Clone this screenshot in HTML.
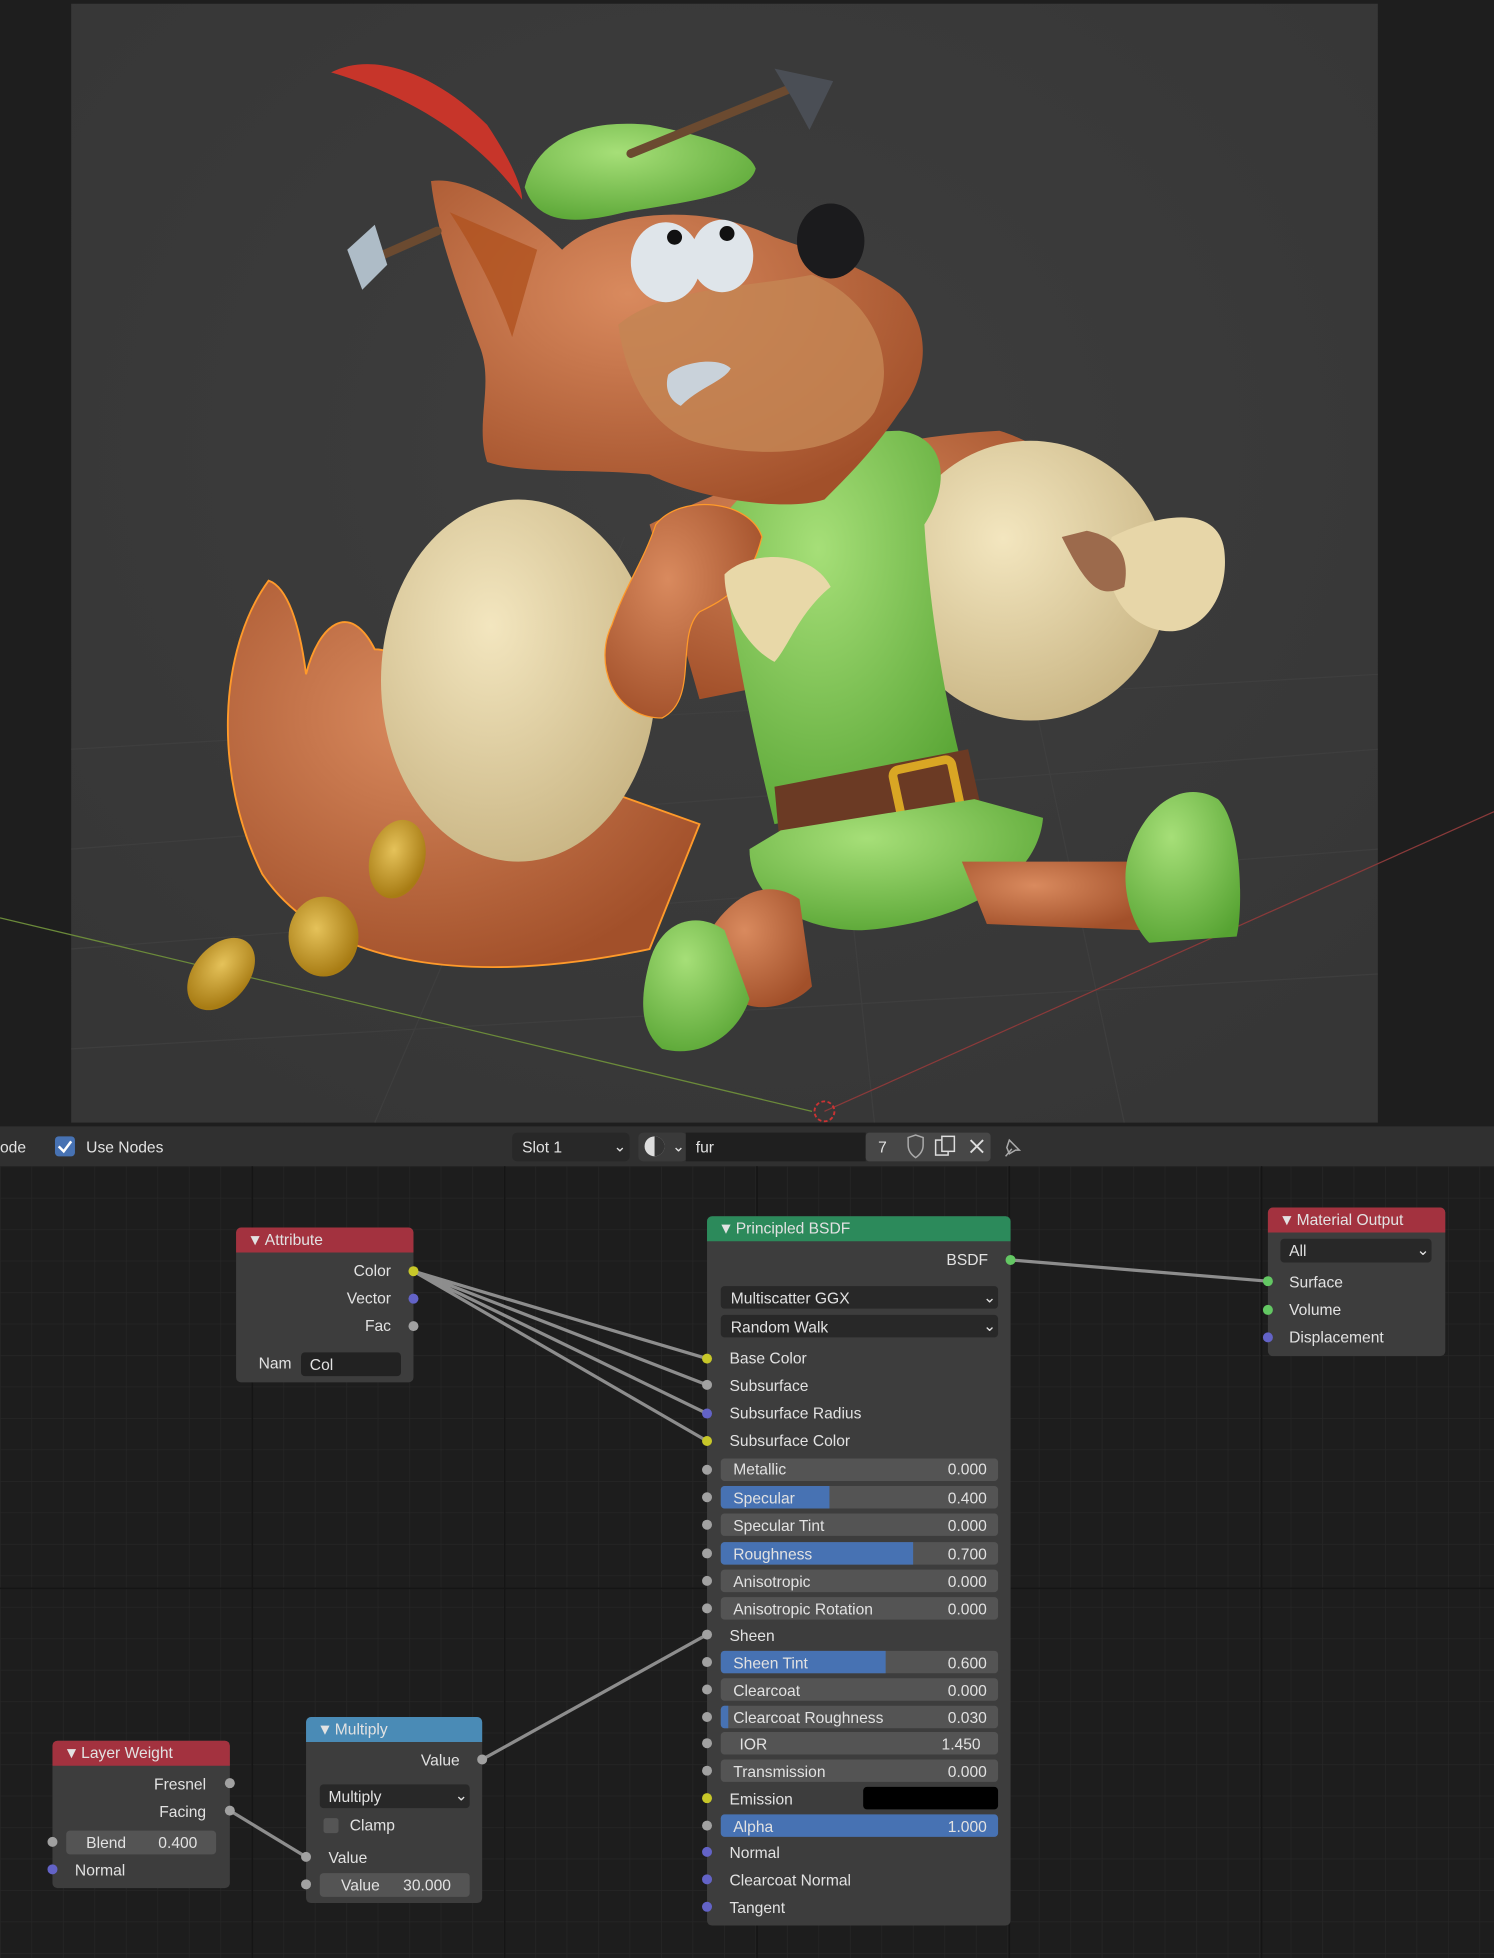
<!DOCTYPE html>
<html><head><meta charset="utf-8"><style>
html,body{margin:0;padding:0;background:#1d1d1d;overflow:hidden}
svg{display:block}
text{font-family:"Liberation Sans",sans-serif;font-size:12.5px;fill:#e2e2e2}
</style></head><body>
<svg width="1494" height="1958" viewBox="0 0 1196 1568" preserveAspectRatio="none" xmlns="http://www.w3.org/2000/svg">
<defs>
<pattern id="g" width="25.2" height="25.2" patternUnits="userSpaceOnUse" x="0" y="934">
<rect width="25.2" height="25.2" fill="#1d1d1d"/><path d="M0 0H25.2M0 0V25.2" stroke="#272727" stroke-width="1"/></pattern>
<radialGradient id="vp" cx="0.5" cy="0.4" r="0.7"><stop offset="0" stop-color="#3e3e3e"/><stop offset="1" stop-color="#363636"/></radialGradient>
<radialGradient id="or" cx="0.4" cy="0.35" r="0.7"><stop offset="0" stop-color="#d98a5e"/><stop offset="1" stop-color="#a2502a"/></radialGradient>
<radialGradient id="cr" cx="0.4" cy="0.35" r="0.7"><stop offset="0" stop-color="#f3e6bf"/><stop offset="1" stop-color="#c9b584"/></radialGradient>
<radialGradient id="gr" cx="0.4" cy="0.3" r="0.8"><stop offset="0" stop-color="#a6df78"/><stop offset="1" stop-color="#56a332"/></radialGradient>
<radialGradient id="au" cx="0.4" cy="0.4" r="0.6"><stop offset="0" stop-color="#e5c25a"/><stop offset="1" stop-color="#a87c14"/></radialGradient>
</defs>
<!-- viewport -->
<rect x="0" y="0" width="1196" height="902" fill="#1e1e1e"/>
<rect x="57" y="3" width="1046" height="896" fill="url(#vp)"/>
<g stroke="#424242" stroke-width="1" fill="none" opacity="0.7">
<path d="M57 600L1103 540M57 680L1103 600M57 760L1103 680M57 840L1103 780M300 899L500 430M700 899L650 430M900 899L800 430"/>
</g>
<path d="M0 735L650 890" stroke="#6b8a3a" stroke-width="1"/>
<path d="M660 890L1196 650" stroke="#8a3a3a" stroke-width="1"/>
<!-- tail -->
<path d="M215 465C175 520 170 620 210 700C260 775 380 790 520 760L560 660L420 610C360 560 330 520 300 520C280 480 255 500 245 540C240 500 230 470 215 465Z" fill="url(#or)" stroke="#ff9a2a" stroke-width="1.5"/>
<!-- body behind -->
<path d="M520 420C600 380 700 350 800 345C850 360 880 400 870 450L760 520L560 560Z" fill="url(#or)"/>
<!-- right bag -->
<ellipse cx="825" cy="465" rx="110" ry="112" fill="url(#cr)"/>
<path d="M890 430C930 410 975 405 980 440C985 480 960 510 930 505C900 500 880 470 890 430Z" fill="#e7d6a8"/>
<path d="M850 430C870 470 880 480 900 470C905 445 895 430 870 425Z" fill="#9c6a4c"/>
<!-- left bag -->
<ellipse cx="415" cy="545" rx="110" ry="145" fill="url(#cr)"/>
<!-- tunic -->
<path d="M575 420C600 380 660 345 720 345C760 350 760 390 740 420C745 500 760 580 775 630L620 660C600 580 585 500 575 420Z" fill="url(#gr)"/>
<path d="M620 630L775 600L785 645L625 685Z" fill="#6b3a24"/>
<rect x="718" y="612" width="48" height="45" rx="5" fill="none" stroke="#d9a624" stroke-width="7" transform="rotate(-12 742 634)"/>
<path d="M600 680L625 665L780 640L835 655C830 710 760 740 690 745C640 745 600 720 600 680Z" fill="url(#gr)"/>
<!-- right leg -->
<path d="M770 690L910 690L915 745L790 740Z" fill="url(#or)"/>
<path d="M905 680C920 640 950 625 975 640C995 660 995 730 990 750L920 755C905 740 895 705 905 680Z" fill="url(#gr)"/>
<!-- left leg -->
<path d="M560 760C580 720 610 700 640 720L650 790C630 810 600 810 590 800Z" fill="url(#or)"/>
<path d="M520 770C530 735 560 730 580 745L600 800C590 830 560 848 530 840C512 825 512 800 520 770Z" fill="url(#gr)"/>
<!-- arm -->
<path d="M525 420C545 395 600 400 610 430C600 470 580 480 560 490C540 510 560 560 530 575C490 575 475 530 490 500C500 470 515 450 525 420Z" fill="url(#or)" stroke="#ff9a2a" stroke-width="1"/>
<path d="M580 460C600 440 650 440 665 470C640 490 630 520 620 530C600 520 580 490 580 460Z" fill="#e8d8a8"/>
<!-- head -->
<path d="M345 145C380 140 430 180 450 200C480 170 560 160 620 190C680 210 700 220 720 235C745 260 745 300 720 330C700 360 680 380 660 400C630 410 560 400 520 380C470 375 420 380 390 370C380 340 395 310 385 280C370 240 350 190 345 145Z" fill="url(#or)"/>
<path d="M495 260C530 230 600 230 650 220C700 240 720 290 700 330C680 360 620 370 560 355C520 345 500 300 495 260Z" fill="#c48553" opacity="0.85"/>
<path d="M360 170C380 200 400 240 410 270L430 200Z" fill="#b0521f" opacity="0.8"/>
<path d="M535 300C545 290 575 285 585 295C580 305 560 310 545 325C535 320 532 310 535 300Z" fill="#c9d2da"/>
<ellipse cx="533" cy="210" rx="28" ry="32" fill="#dfe5ea"/>
<ellipse cx="578" cy="205" rx="25" ry="29" fill="#dfe5ea"/>
<circle cx="540" cy="190" r="6" fill="#111"/><circle cx="582" cy="187" r="6" fill="#111"/>
<ellipse cx="665" cy="193" rx="27" ry="30" fill="#1b1b1d"/>
<!-- feather -->
<path d="M265 58C300 40 350 60 390 100C410 130 418 150 418 160C390 120 340 80 265 58Z" fill="#c7352a"/>
<!-- hat -->
<path d="M420 150C430 110 470 95 520 100C570 110 600 120 605 135C600 155 560 160 500 170C460 180 430 180 420 150Z" fill="url(#gr)"/>
<!-- arrows -->
<path d="M300 207L350 185" stroke="#6b4a30" stroke-width="7" stroke-linecap="round"/>
<path d="M278 200L300 180L310 212L290 232Z" fill="#aebcc7"/>
<path d="M505 123L630 72" stroke="#6b4a30" stroke-width="7" stroke-linecap="round"/>
<path d="M620 55L667 65L648 104L635 80Z" fill="#4a4e55"/>
<!-- coins -->
<ellipse cx="318" cy="688" rx="22" ry="32" fill="url(#au)" transform="rotate(15 318 688)"/>
<ellipse cx="259" cy="750" rx="28" ry="32" fill="url(#au)"/>
<ellipse cx="177" cy="780" rx="22" ry="33" fill="url(#au)" transform="rotate(40 177 780)"/>
<circle cx="660" cy="890" r="8" fill="none" stroke="#c33" stroke-width="1.5" stroke-dasharray="3 2"/>

<!-- header bar -->
<rect x="0" y="902" width="1196" height="32" fill="#303030"/>
<text x="0" y="923">ode</text>
<rect x="44" y="910" width="16" height="16" rx="3" fill="#4772b3"/>
<path d="M47 918l4 4 6-8" stroke="#fff" stroke-width="2" fill="none"/>
<text x="69" y="923">Use Nodes</text>
<rect x="410" y="907" width="94" height="23" rx="4" fill="#282828"/>
<text x="418" y="923">Slot 1</text><text x="491" y="922" font-size="10">⌄</text>
<rect x="511" y="907" width="39" height="23" rx="4" fill="#3a3a3a"/>
<circle cx="524" cy="918" r="8" fill="#ddd"/><path d="M524 910a8 8 0 0 1 0 16z" fill="#333"/>
<text x="538" y="922" font-size="10">⌄</text>
<rect x="549" y="907" width="144" height="23" fill="#1f1f1f"/>
<text x="557" y="923">fur</text>
<rect x="693" y="907" width="100" height="23" rx="3" fill="#474747"/>
<text x="703" y="923">7</text>
<path d="M727 911l6-2 6 2v6c0 5-3 8-6 10c-3-2-6-5-6-10z" fill="none" stroke="#aaa" stroke-width="1.2"/>
<rect x="749" y="913" width="10" height="12" fill="none" stroke="#ddd" stroke-width="1.2"/><rect x="754" y="910" width="10" height="12" fill="#474747" stroke="#ddd" stroke-width="1.2"/>
<path d="M777 913l10 10M787 913l-10 10" stroke="#ddd" stroke-width="1.5"/>
<path d="M805 926l5-6M808 913l8 8l-3 0l-5 3l-2-5z" stroke="#aaa" stroke-width="1.2" fill="none"/>

<!-- node editor -->
<rect x="0" y="934" width="1196" height="634" fill="url(#g)"/>
<path d="M202 934V1568M404 934V1568M606 934V1568M808 934V1568M1010 934V1568M0 1272H1196" stroke="#151515" stroke-width="1.2"/>

<!-- links -->
<g stroke="#9a9a9a" stroke-width="2.6" fill="none" opacity="0.9">
<path d="M331 1018L566 1088M331 1018L566 1109M331 1018L566 1132M331 1018L566 1154"/>
<path d="M809 1009L1015 1026"/>
<path d="M386 1409L566 1309"/>
<path d="M184 1450L245 1487"/>
</g>

<!-- Attribute node -->
<rect x="189" y="983" width="142" height="124" rx="4" fill="#3d3d3d"/>
<path d="M189 1003V987a4 4 0 0 1 4-4h134a4 4 0 0 1 4 4v16z" fill="#a3323f"/>
<text x="198" y="997" font-size="8">▼</text><text x="212" y="997">Attribute</text>
<text x="313" y="1022" text-anchor="end">Color</text>
<text x="313" y="1044" text-anchor="end">Vector</text>
<text x="313" y="1066" text-anchor="end">Fac</text>
<text x="207" y="1096">Nam</text>
<rect x="241" y="1083" width="80" height="19" rx="3" fill="#222"/><text x="248" y="1097">Col</text>
<circle cx="331" cy="1018" r="4" fill="#c7c729"/><circle cx="331" cy="1040" r="4" fill="#6363c7"/><circle cx="331" cy="1062" r="4" fill="#a1a1a1"/>

<!-- Material Output -->
<rect x="1015" y="967" width="142" height="119" rx="4" fill="#3d3d3d"/>
<path d="M1015 987V971a4 4 0 0 1 4-4h134a4 4 0 0 1 4 4v16z" fill="#a3323f"/>
<text x="1024" y="981" font-size="8">▼</text><text x="1038" y="981">Material Output</text>
<rect x="1025" y="992" width="121" height="19" rx="3" fill="#282828"/><text x="1032" y="1006">All</text><text x="1134" y="1005" font-size="10">⌄</text>
<text x="1032" y="1031">Surface</text><text x="1032" y="1053">Volume</text><text x="1032" y="1075">Displacement</text>
<circle cx="1015" cy="1026" r="4" fill="#63c763"/><circle cx="1015" cy="1049" r="4" fill="#63c763"/><circle cx="1015" cy="1071" r="4" fill="#6363c7"/>

<!-- Principled BSDF -->
<rect x="566" y="974" width="243" height="568" rx="4" fill="#3d3d3d"/>
<path d="M566 994V978a4 4 0 0 1 4-4h235a4 4 0 0 1 4 4v16z" fill="#2c8a5b"/>
<text x="575" y="988" font-size="8">▼</text><text x="589" y="988">Principled BSDF</text>
<text x="791" y="1013" text-anchor="end">BSDF</text><circle cx="809" cy="1009" r="4" fill="#63c763"/>
<rect x="577" y="1030" width="222" height="18" rx="3" fill="#282828"/><text x="585" y="1044">Multiscatter GGX</text><text x="787" y="1043" font-size="10">⌄</text>
<rect x="577" y="1053" width="222" height="18" rx="3" fill="#282828"/><text x="585" y="1067">Random Walk</text><text x="787" y="1066" font-size="10">⌄</text>
<g>
<text x="584" y="1092">Base Color</text><circle cx="566" cy="1088" r="4" fill="#c7c729"/>
<text x="584" y="1114">Subsurface</text><circle cx="566" cy="1109" r="4" fill="#a1a1a1"/>
<text x="584" y="1136">Subsurface Radius</text><circle cx="566" cy="1132" r="4" fill="#6363c7"/>
<text x="584" y="1158">Subsurface Color</text><circle cx="566" cy="1154" r="4" fill="#c7c729"/>
</g>
<g fill="#545454">
<rect x="577" y="1168" width="222" height="18" rx="3"/><rect x="577" y="1190" width="222" height="18" rx="3"/><rect x="577" y="1212" width="222" height="18" rx="3"/><rect x="577" y="1235" width="222" height="18" rx="3"/><rect x="577" y="1257" width="222" height="18" rx="3"/><rect x="577" y="1279" width="222" height="18" rx="3"/>
<rect x="577" y="1322" width="222" height="18" rx="3"/><rect x="577" y="1344" width="222" height="18" rx="3"/><rect x="577" y="1366" width="222" height="18" rx="3"/><rect x="577" y="1387" width="222" height="18" rx="3"/><rect x="577" y="1409" width="222" height="18" rx="3"/>
</g>
<g fill="#4772b3">
<path d="M580 1190h84v18h-84a3 3 0 0 1-3-3v-12a3 3 0 0 1 3-3z"/>
<path d="M580 1235h151v18h-151a3 3 0 0 1-3-3v-12a3 3 0 0 1 3-3z"/>
<path d="M580 1322h129v18h-129a3 3 0 0 1-3-3v-12a3 3 0 0 1 3-3z"/>
<path d="M580 1366h3v18h-3a3 3 0 0 1-3-3v-12a3 3 0 0 1 3-3z"/>
<rect x="577" y="1453" width="222" height="18" rx="3"/>
</g>
<rect x="691" y="1431" width="108" height="18" rx="3" fill="#000"/>
<g>
<text x="587" y="1181">Metallic</text><text x="790" y="1181" text-anchor="end">0.000</text>
<text x="587" y="1204">Specular</text><text x="790" y="1204" text-anchor="end">0.400</text>
<text x="587" y="1226">Specular Tint</text><text x="790" y="1226" text-anchor="end">0.000</text>
<text x="587" y="1249">Roughness</text><text x="790" y="1249" text-anchor="end">0.700</text>
<text x="587" y="1271">Anisotropic</text><text x="790" y="1271" text-anchor="end">0.000</text>
<text x="587" y="1293">Anisotropic Rotation</text><text x="790" y="1293" text-anchor="end">0.000</text>
<text x="584" y="1314">Sheen</text>
<text x="587" y="1336">Sheen Tint</text><text x="790" y="1336" text-anchor="end">0.600</text>
<text x="587" y="1358">Clearcoat</text><text x="790" y="1358" text-anchor="end">0.000</text>
<text x="587" y="1380">Clearcoat Roughness</text><text x="790" y="1380" text-anchor="end">0.030</text>
<text x="592" y="1401">IOR</text><text x="785" y="1401" text-anchor="end">1.450</text>
<text x="587" y="1423">Transmission</text><text x="790" y="1423" text-anchor="end">0.000</text>
<text x="584" y="1445">Emission</text>
<text x="587" y="1467">Alpha</text><text x="790" y="1467" text-anchor="end">1.000</text>
<text x="584" y="1488">Normal</text>
<text x="584" y="1510">Clearcoat Normal</text>
<text x="584" y="1532">Tangent</text>
</g>
<g fill="#a1a1a1">
<circle cx="566" cy="1177" r="4"/><circle cx="566" cy="1199" r="4"/><circle cx="566" cy="1221" r="4"/><circle cx="566" cy="1244" r="4"/><circle cx="566" cy="1266" r="4"/><circle cx="566" cy="1288" r="4"/><circle cx="566" cy="1309" r="4"/><circle cx="566" cy="1331" r="4"/><circle cx="566" cy="1353" r="4"/><circle cx="566" cy="1375" r="4"/><circle cx="566" cy="1396" r="4"/><circle cx="566" cy="1418" r="4"/><circle cx="566" cy="1462" r="4"/>
</g>
<circle cx="566" cy="1440" r="4" fill="#c7c729"/>
<circle cx="566" cy="1483" r="4" fill="#6363c7"/><circle cx="566" cy="1505" r="4" fill="#6363c7"/><circle cx="566" cy="1527" r="4" fill="#6363c7"/>

<!-- Layer Weight -->
<rect x="42" y="1394" width="142" height="118" rx="4" fill="#3d3d3d"/>
<path d="M42 1414V1398a4 4 0 0 1 4-4h134a4 4 0 0 1 4 4v16z" fill="#a3323f"/>
<text x="51" y="1408" font-size="8">▼</text><text x="65" y="1408">Layer Weight</text>
<text x="165" y="1433" text-anchor="end">Fresnel</text><text x="165" y="1455" text-anchor="end">Facing</text>
<rect x="53" y="1466" width="120" height="19" rx="3" fill="#545454"/>
<text x="69" y="1480">Blend</text><text x="158" y="1480" text-anchor="end">0.400</text>
<text x="60" y="1502">Normal</text>
<circle cx="184" cy="1428" r="4" fill="#a1a1a1"/><circle cx="184" cy="1450" r="4" fill="#a1a1a1"/>
<circle cx="42" cy="1475" r="4" fill="#a1a1a1"/><circle cx="42" cy="1497" r="4" fill="#6363c7"/>

<!-- Multiply -->
<rect x="245" y="1375" width="141" height="149" rx="4" fill="#3d3d3d"/>
<path d="M245 1395V1379a4 4 0 0 1 4-4h133a4 4 0 0 1 4 4v16z" fill="#4a8bb6"/>
<text x="254" y="1389" font-size="8">▼</text><text x="268" y="1389">Multiply</text>
<text x="368" y="1414" text-anchor="end">Value</text>
<rect x="256" y="1429" width="120" height="19" rx="3" fill="#282828"/><text x="263" y="1443">Multiply</text><text x="364" y="1442" font-size="10">⌄</text>
<rect x="259" y="1456" width="12" height="12" rx="2" fill="#555"/><text x="280" y="1466">Clamp</text>
<text x="263" y="1492">Value</text>
<rect x="256" y="1500" width="120" height="19" rx="3" fill="#545454"/>
<text x="273" y="1514">Value</text><text x="361" y="1514" text-anchor="end">30.000</text>
<circle cx="386" cy="1409" r="4" fill="#a1a1a1"/><circle cx="245" cy="1487" r="4" fill="#a1a1a1"/><circle cx="245" cy="1509" r="4" fill="#a1a1a1"/>
</svg>
</body></html>
